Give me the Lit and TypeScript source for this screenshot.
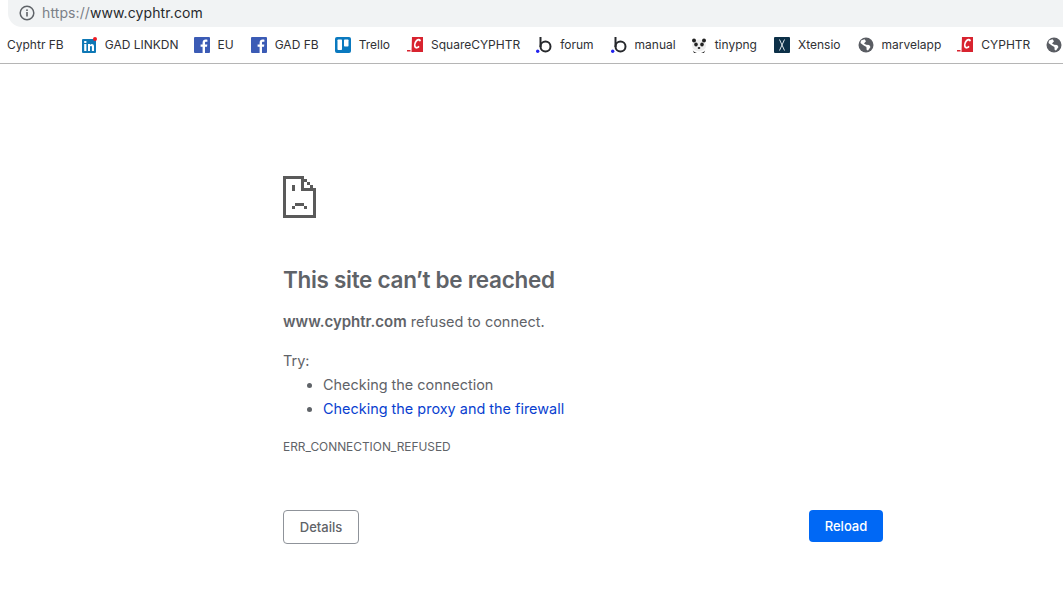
import { LitElement, html, css, svg } from "lit";
import { customElement } from "lit/decorators.js";

const fb = svg`<rect x="0" y="0" width="16" height="16" rx="1" fill="#3b5bb5"/><path d="M11 16V9.800h2l.3-2.400H11V6c0-.7.2-1.200 1.200-1.200h1.200V2.700c-.3 0-1-.1-1.800-.1-1.800 0-3 1.100-3 3.100v1.700h-2v2.400h2V16z" fill="#fff"/>`;
const cy = svg`<path d="M5 0h11v15H4.500z" fill="#d8232f"/><path d="M0 13h3.500v1.500H0z" fill="#d8232f"/><path d="M13 3.500c-.6-1.200-2.500-1-3.700.5-1.300 1.700-1.900 4.700-1.100 6 .7 1.100 2.200.9 3.300-.2" fill="none" stroke="#fff" stroke-width="1.800" stroke-linecap="round"/>`;
const bee = svg`<path d="M4.500 0v10" stroke="#26282c" stroke-width="2" fill="none"/><circle cx="9.500" cy="9.500" r="5" fill="none" stroke="#26282c" stroke-width="2"/><circle cx="1.700" cy="14.200" r="1.700" fill="#2222ee"/>`;
const globe = svg`<circle cx="8" cy="8" r="7.500" fill="#5a5d63"/><path d="M3 3.500l3.500-1.200 1.500 2-2 2.200 2.200 1.200 3 .3 1.300 2-2.500 3.500-1.300-.5-.3-3-3-1.800L2.500 6z" fill="#fff"/>`;

const items: { label?: string; icon?: unknown; mr: number; gap?: number }[] = [
  { label: "Cyphtr FB", mr: 18 },
  { label: "GAD LINKDN", icon: svg`<rect x="0" y="2" width="14" height="14" rx="1" fill="#0f78b5"/><rect x="2.200" y="7" width="2.200" height="7" fill="#fff"/><rect x="2.200" y="4" width="2.200" height="2" fill="#fff"/><path d="M6 7h2v1c1-1.500 4-1.500 4 1.200V14H9.900V10c0-1.500-1.900-1.300-1.900 0v4H6z" fill="#fff"/><circle cx="13" cy="2" r="2" fill="#ee1d24"/>`, mr: 15, gap: 7 },
  { label: "EU", icon: fb, mr: 17 },
  { label: "GAD FB", icon: fb, mr: 16 },
  { label: "Trello", icon: svg`<rect width="16" height="16" rx="2" fill="#0a79bf"/><rect x="2.500" y="2.500" width="4.500" height="10.500" rx=".7" fill="#fff"/><rect x="9" y="2.500" width="4.500" height="7" rx=".7" fill="#fff"/>`, mr: 17 },
  { label: "SquareCYPHTR", icon: cy, mr: 16 },
  { label: "forum", icon: bee, mr: 17 },
  { label: "manual", icon: bee, mr: 15 },
  { label: "tinypng", icon: svg`<ellipse cx="8" cy="8.500" rx="7" ry="6" fill="#eee"/><circle cx="3" cy="3.500" r="2" fill="#222"/><circle cx="13" cy="3.500" r="2" fill="#222"/><ellipse cx="5" cy="7.500" rx="1.800" ry="2" fill="#222"/><ellipse cx="11" cy="7.500" rx="1.800" ry="2" fill="#222"/><ellipse cx="8" cy="11" rx="1.300" ry=".9" fill="#222"/><path d="M1 11.500c1 3 3 4 5 4l-3 .5zM15 11.500c-1 3-3 4-5 4l3 .5z" fill="#222"/>`, mr: 17 },
  { label: "Xtensio", icon: svg`<rect width="16" height="16" rx="1" fill="#0d3048"/><path d="M5.500 2.500 8 8l2.500 5.500M10.500 2.500 8 8l-2.500 5.500" stroke="#dfe6ea" stroke-width="1" fill="none"/>`, mr: 17 },
  { label: "marvelapp", icon: globe, mr: 16 },
  { label: "CYPHTR", icon: cy, mr: 16 },
  { icon: globe, mr: 0 },
];

const px = (x: number, y: number, w: number, h: number) => svg`<rect x=${x} y=${y} width=${w} height=${h} />`;

@customElement("app-root")
export class AppRoot extends LitElement {
  static styles = css`
    :host { display: block; height: 602px; overflow: hidden; background: #fff; font-family: Inter, "Liberation Sans", sans-serif; color: #5f6368; }
    .address { margin-left: 8px; height: 27px; background: #f1f3f4; border-radius: 0 0 0 14px; display: flex; align-items: center; padding-left: 11px; gap: 7px; box-sizing: border-box; padding-bottom: 2px; }
    .address svg { width: 16px; height: 16px; flex: none; }
    .url { font-size: 14px; letter-spacing: .1px; color: #27292c; }
    .url span { color: #7b8087; }
    .bar { height: 37px; box-sizing: border-box; border-bottom: 1px solid #b5b5b5; display: flex; align-items: center; padding-left: 7px; padding-bottom: 1px; overflow: hidden; white-space: nowrap; }
    .bm { display: flex; align-items: center; gap: 8px; flex: none; font-size: 12px; color: #2f3135; }
    .bm svg { width: 16px; height: 16px; flex: none; }
    main { width: 600px; margin-left: 283px; padding-top: 112px; }
    .icon { display: block; width: 33px; height: 42px; fill: #5a5a5a; }
    h1 { margin: 46px 0 0; font-size: 22.500px; line-height: 32px; font-weight: 600; color: #5f6368; letter-spacing: -.3px; }
    .msg { margin: 16px 0 0; font-size: 14.500px; line-height: 20px; }
    .msg b { font-size: 15px; font-weight: 600; }
    .try { margin: 19px 0 0; font-size: 14.500px; line-height: 20px; }
    ul { margin: 4px 0 0; padding-left: 40px; font-size: 14.450px; }
    li { line-height: 20px; margin-bottom: 4px; }
    a { color: #0a3fd0; text-decoration: none; }
    .code { margin-top: 20px; font-size: 11.900px; line-height: 16px; }
    .actions { margin-top: 55px; display: flex; justify-content: space-between; align-items: flex-start; }
    button { font: 500 13px Inter, "Liberation Sans", sans-serif; border-radius: 4px; box-sizing: border-box; padding: 0; }
    .details { width: 76px; height: 34px; background: #fff; border: 1px solid #8f939a; color: #5f6368; }
    .reload { width: 74px; height: 32px; background: #0068f5; border: 0; color: #fff; }
  `;

  render() {
    return html`
      <div class="address">
        <svg viewBox="0 0 16 16"><circle cx="8" cy="8" r="6.800" fill="none" stroke="#5f6368" stroke-width="1.500"/><rect x="7.200" y="7" width="1.600" height="4.500" fill="#5f6368"/><rect x="7.200" y="4.400" width="1.600" height="1.600" fill="#5f6368"/></svg>
        <div class="url"><span>https://</span>www.cyphtr.com</div>
      </div>
      <div class="bar">
        ${items.map(
          (i) => html`<div class="bm" style="margin-right:${i.mr}px;gap:${i.gap ?? 8}px">
            ${i.icon ? html`<svg viewBox="0 0 16 16">${i.icon}</svg>` : ""}
            ${i.label ? html`<span>${i.label}</span>` : ""}
          </div>`
        )}
      </div>
      <main>
        <svg class="icon" viewBox="0 0 33 42" shape-rendering="crispEdges">
          ${px(0, 0, 21, 3)}${px(0, 0, 3, 42)}${px(0, 39, 33, 3)}${px(30, 12, 3, 30)}
          ${px(21, 3, 3, 3)}${px(24, 6, 3, 3)}${px(27, 9, 3, 3)}
          ${px(18, 0, 3, 15)}${px(18, 12, 15, 3)}
          ${px(9, 9, 3, 6)}
          ${px(12, 27, 9, 3)}${px(9, 30, 3, 3)}${px(21, 30, 3, 3)}
        </svg>
        <h1>This site can’t be reached</h1>
        <p class="msg"><b>www.cyphtr.com</b> refused to connect.</p>
        <div class="try">Try:</div>
        <ul>
          <li>Checking the connection</li>
          <li><a href="#">Checking the proxy and the firewall</a></li>
        </ul>
        <div class="code">ERR_CONNECTION_REFUSED</div>
        <div class="actions">
          <button class="details">Details</button>
          <button class="reload">Reload</button>
        </div>
      </main>
    `;
  }
}
